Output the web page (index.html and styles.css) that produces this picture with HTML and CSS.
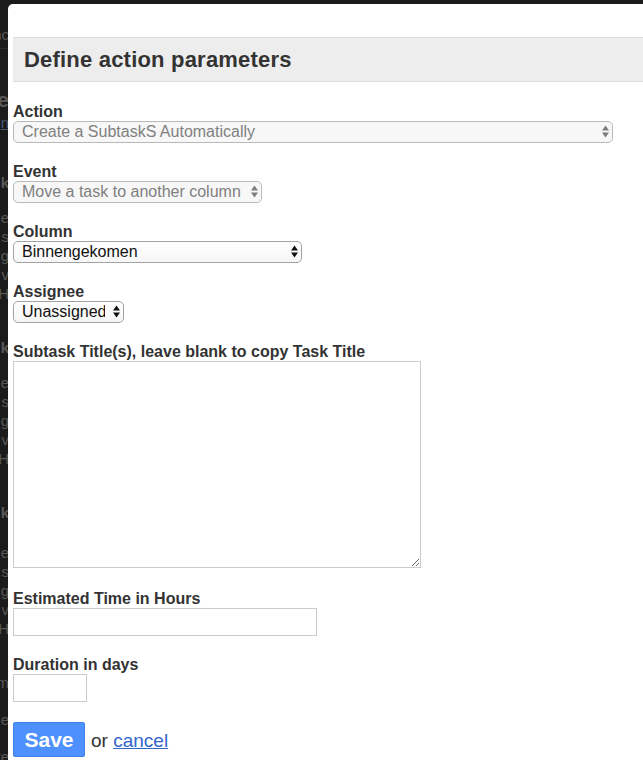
FILE: index.html
```html
<!DOCTYPE html>
<html lang="en">
<head>
<meta charset="utf-8">
<title>Define action parameters</title>
<link rel="stylesheet" href="styles.css">
</head>
<body>
<div class="backdrop" aria-hidden="true">
  <div class="bl mt25">nc</div>
  <div class="rule mt4"></div>
  <div class="bl big mt41">ie</div>
  <div class="bl link mt4">n</div>
  <div class="bl b mt41">k</div>
  <div class="bl mt16">e</div>
  <div class="bl">s</div>
  <div class="bl">g</div>
  <div class="bl">v</div>
  <div class="bl">H</div>
  <div class="bl b mt35">k</div>
  <div class="bl mt16">e</div>
  <div class="bl">s</div>
  <div class="bl">g</div>
  <div class="bl">v</div>
  <div class="bl">H</div>
  <div class="bl b mt35">k</div>
  <div class="bl mt21">e</div>
  <div class="bl">s</div>
  <div class="bl">g</div>
  <div class="bl">v</div>
  <div class="bl">H</div>
  <div class="bl mt35">m</div>
  <div class="bl mt18">e</div>
  <div class="bl mt18">re</div>
</div>

<div class="modal">
  <div class="modal-header">
    <h2>Define action parameters</h2>
  </div>
  <form class="form">
    <div class="field">
      <label class="label" for="action">Action</label>
      <span class="select-wrap w-action is-disabled">
        <select id="action" disabled><option>Create a SubtaskS Automatically</option></select>
        <svg class="arrows" width="7" height="13" viewBox="0 0 7 13"><path d="M3.5 0.5 L7 5.5 L0 5.5 Z M0 7.5 L7 7.5 L3.5 12.5 Z"/></svg>
      </span>
    </div>
    <div class="field">
      <label class="label" for="event">Event</label>
      <span class="select-wrap w-event is-disabled">
        <select id="event" disabled><option>Move a task to another column</option></select>
        <svg class="arrows" width="7" height="13" viewBox="0 0 7 13"><path d="M3.5 0.5 L7 5.5 L0 5.5 Z M0 7.5 L7 7.5 L3.5 12.5 Z"/></svg>
      </span>
    </div>
    <div class="field">
      <label class="label" for="column">Column</label>
      <span class="select-wrap w-column">
        <select id="column"><option>Binnengekomen</option></select>
        <svg class="arrows" width="7" height="13" viewBox="0 0 7 13"><path d="M3.5 0.5 L7 5.5 L0 5.5 Z M0 7.5 L7 7.5 L3.5 12.5 Z"/></svg>
      </span>
    </div>
    <div class="field">
      <label class="label" for="assignee">Assignee</label>
      <span class="select-wrap w-assignee">
        <select id="assignee"><option>Unassigned</option></select>
        <svg class="arrows" width="7" height="13" viewBox="0 0 7 13"><path d="M3.5 0.5 L7 5.5 L0 5.5 Z M0 7.5 L7 7.5 L3.5 12.5 Z"/></svg>
      </span>
    </div>
    <div class="field field-text">
      <label class="label" for="subtasks">Subtask Title(s), leave blank to copy Task Title</label>
      <textarea id="subtasks" class="textarea"></textarea>
    </div>
    <div class="field">
      <label class="label" for="hours">Estimated Time in Hours</label>
      <input id="hours" class="input w-hours" type="text">
    </div>
    <div class="field">
      <label class="label" for="days">Duration in days</label>
      <input id="days" class="input w-days" type="text">
    </div>
    <div class="actions">
      <button type="submit" class="btn-save">Save</button>
      <span class="or">or <a href="#" class="cancel">cancel</a></span>
    </div>
  </form>
</div>
</body>
</html>
```

FILE: styles.css
```css
html, body {
  height: 100%;
}

body {
  margin: 0;
  background: #1b1b1b;
  overflow: hidden;
  font-family: "Liberation Sans", Arial, sans-serif;
  color: #333;
}

/* page behind the dialog */
.backdrop {
  width: 9px;
  overflow: hidden;
  display: flex;
  flex-direction: column;
}

.bl {
  display: flex;
  justify-content: flex-end;
  height: 19px;
  line-height: 19px;
  font-size: 15px;
  color: #585858;
  white-space: nowrap;
}

.bl.big {
  font-size: 21px;
  font-weight: bold;
}

.bl.b {
  font-weight: bold;
}

.bl.link {
  text-decoration: underline;
  color: #4a5a78;
}

.rule {
  height: 1px;
  background: #2e2e2e;
}

.mt4 { margin-top: 4px; }
.mt16 { margin-top: 16px; }
.mt18 { margin-top: 18px; }
.mt21 { margin-top: 21px; }
.mt25 { margin-top: 25px; }
.mt35 { margin-top: 35px; }
.mt41 { margin-top: 41px; }

/* dialog */
.modal {
  position: absolute;
  top: 4px;
  left: 8px;
  right: 0;
  bottom: 0;
  background: #fff;
  border-top-left-radius: 5px;
  padding: 33px 0 0 5px;
}

.modal-header {
  background: #ededed;
  border-top: 1px solid #dddddd;
  border-bottom: 1px solid #dddddd;
}

.modal-header h2 {
  margin: 0;
  padding: 0 11px;
  height: 43px;
  line-height: 43px;
  font-size: 22px;
  letter-spacing: 0.2px;
  font-weight: bold;
  color: #333;
}

.form {
  padding-top: 21px;
}

.field {
  margin-bottom: 20px;
}

.field-text {
  margin-bottom: 22px;
}

.label {
  display: block;
  font-size: 16px;
  line-height: 18px;
  font-weight: bold;
  color: #333;
}

.select-wrap {
  position: relative;
  display: block;
  height: 22px;
}

.select-wrap select {
  -webkit-appearance: none;
  appearance: none;
  display: block;
  box-sizing: border-box;
  width: 100%;
  height: 22px;
  margin: 0;
  padding: 0 18px 0 8px;
  border: 1px solid #a3a3a3;
  border-radius: 5px;
  background: linear-gradient(#ffffff, #f6f6f6);
  font-family: "Liberation Sans", Arial, sans-serif;
  font-size: 16px;
  line-height: 20px;
  color: #111;
}

.select-wrap.is-disabled select {
  background: #f7f7f7;
  border-color: #b9b9b9;
  color: #808080;
  opacity: 1;
}

.arrows {
  position: absolute;
  right: 4px;
  top: 4px;
  fill: #111;
  pointer-events: none;
}

.is-disabled .arrows {
  fill: #7c7c7c;
}

.w-action { width: 600px; }
.w-event { width: 249px; }
.w-column { width: 289px; }
.w-assignee { width: 111px; }

.textarea {
  display: block;
  box-sizing: border-box;
  width: 408px;
  height: 207px;
  margin: 0;
  border: 1px solid #cccccc;
  border-radius: 0;
  padding: 4px;
  font-family: "Liberation Sans", Arial, sans-serif;
  font-size: 16px;
}

.input {
  display: block;
  box-sizing: border-box;
  height: 28px;
  margin: 0;
  border: 1px solid #cccccc;
  border-radius: 0;
  padding: 0 6px;
  font-family: "Liberation Sans", Arial, sans-serif;
  font-size: 16px;
}

.w-hours { width: 304px; }
.w-days { width: 74px; }

.actions {
  display: flex;
  align-items: baseline;
}

.btn-save {
  box-sizing: border-box;
  height: 35px;
  width: 72px;
  margin: 0;
  padding: 0;
  border: 1px solid #3d80ee;
  border-radius: 2px;
  background: #4d90fe;
  color: #fff;
  font-family: "Liberation Sans", Arial, sans-serif;
  font-size: 21px;
  font-weight: bold;
  line-height: 33px;
  cursor: pointer;
}

.or {
  margin-left: 6px;
  font-size: 19px;
  color: #333;
}

.cancel {
  color: #3366cc;
  text-decoration: underline;
}
```
